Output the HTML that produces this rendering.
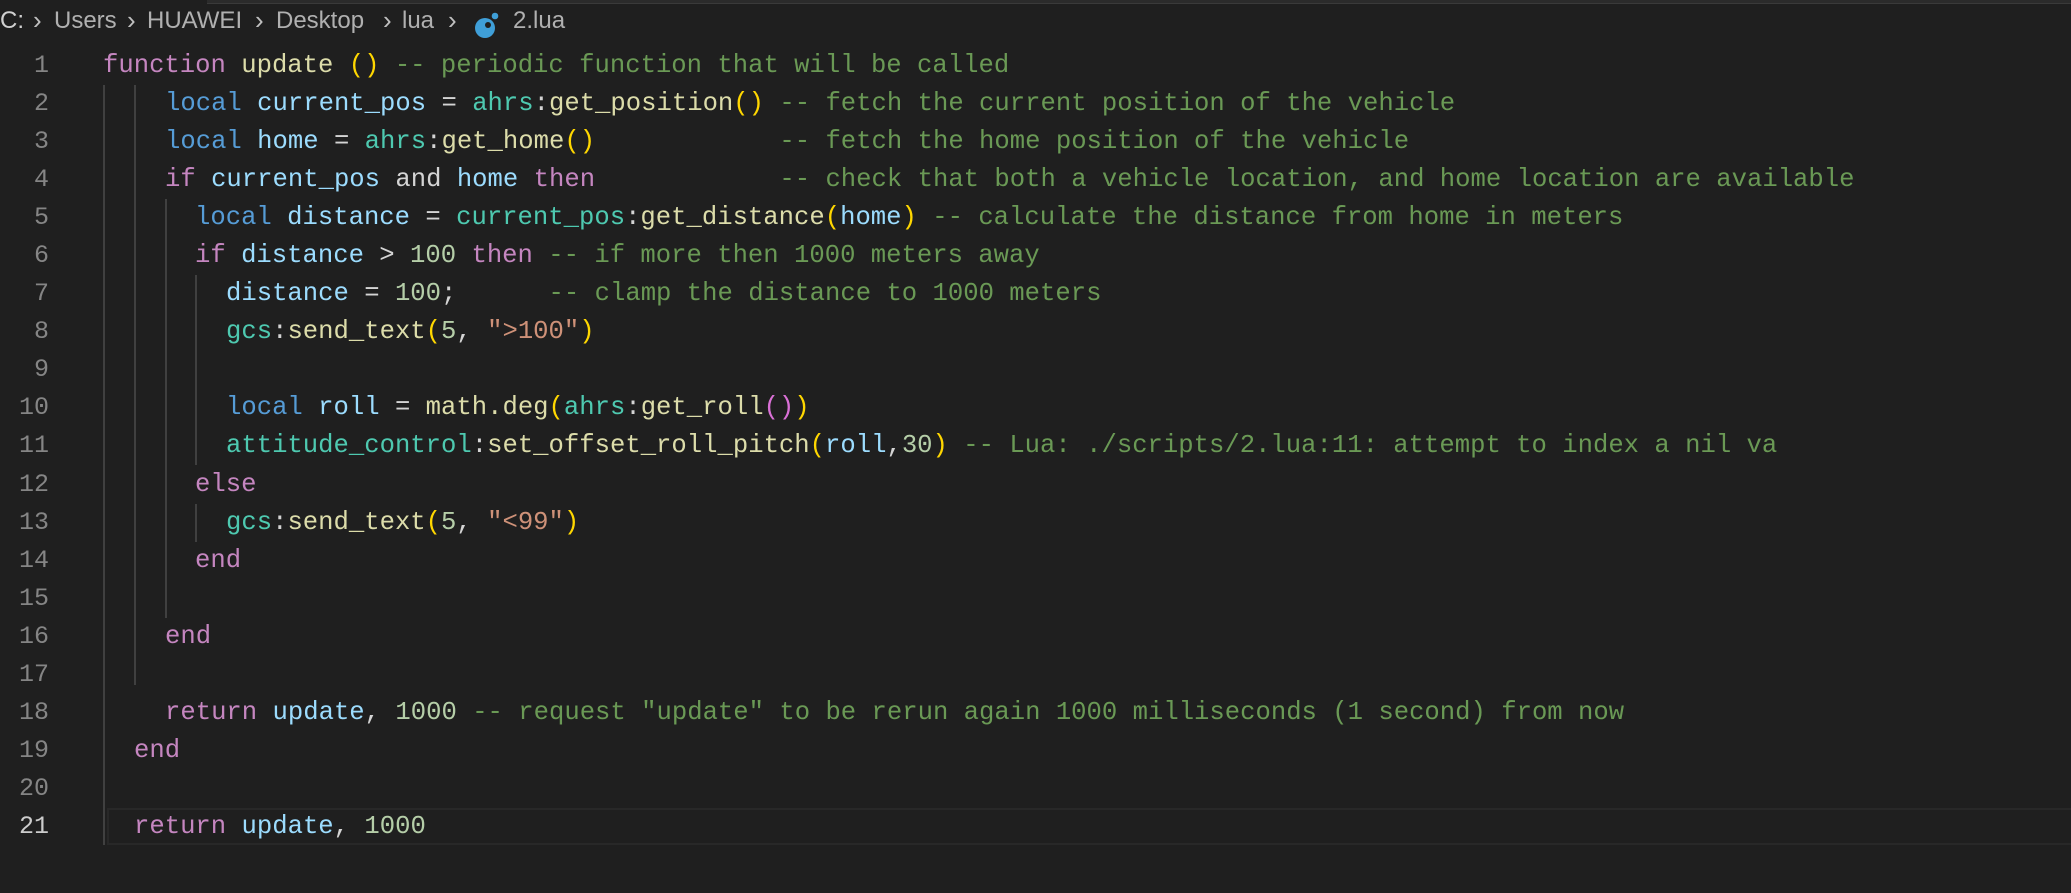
<!DOCTYPE html>
<html><head><meta charset="utf-8"><style>
html,body{margin:0;padding:0;width:2071px;height:893px;background:#1f1f1f;overflow:hidden}
.bc{position:absolute;top:7px;height:36px;font:24px "Liberation Sans",sans-serif;color:#b0b0b0;white-space:nowrap}
.bc span{position:absolute;top:0}
.bc .ch{font-size:26px;top:-2px;color:#c0c0c0}
.topline{position:absolute;top:0;left:207px;right:0;height:3px;background:#2b2b2b;border-bottom:1px solid #3a3a3a}
.ln{position:absolute;left:0;width:49px;text-align:right;font:25px "Liberation Mono",monospace;color:#858585;height:38px;line-height:38px}
.cl{position:absolute;left:0;font:25.6px "Liberation Mono",monospace;color:#d4d4d4;white-space:pre;height:38px;line-height:38px}
.g{position:absolute;width:2px;background:#404040}
.k{color:#c586c0}.b{color:#569cd6}.v{color:#9cdcfe}.f{color:#dcdcaa}.t{color:#4ec9b0}.c{color:#6a9955}.n{color:#b5cea8}.s{color:#ce9178}.y{color:#ffd700}.p{color:#da70d6}
</style></head><body>
<div class="topline"></div>
<div class="bc">
<span style="left:0;color:#d0d0d0">C:</span>
<span class="ch" style="left:33px">›</span>
<span style="left:54px">Users</span>
<span class="ch" style="left:127px">›</span>
<span style="left:147px">HUAWEI</span>
<span class="ch" style="left:255px">›</span>
<span style="left:276px">Desktop</span>
<span class="ch" style="left:383px">›</span>
<span style="left:402px">lua</span>
<span class="ch" style="left:448px">›</span>
<span style="left:513px">2.lua</span>
</div>
<svg style="position:absolute;left:474px;top:12px" width="26" height="28" viewBox="0 0 26 28"><circle cx="11" cy="16" r="10" fill="#3f9fd8"/><circle cx="14" cy="13" r="3" fill="#1f1f1f"/><circle cx="21" cy="4" r="3.3" fill="#3f9fd8"/></svg>

<div style="position:absolute;left:107px;top:808px;right:0;height:33px;border:2px solid #282828;border-right:none"></div>

<div class="g" style="left:103px;top:85px;height:760px"></div>
<div class="g" style="left:134px;top:85px;height:600px"></div>
<div class="g" style="left:165px;top:199px;height:419px"></div>
<div class="g" style="left:195px;top:275px;height:190px"></div>
<div class="g" style="left:195px;top:504px;height:38px"></div>

<div class="ln" style="top:47px">1</div>
<div class="ln" style="top:85px">2</div>
<div class="ln" style="top:123px">3</div>
<div class="ln" style="top:161px">4</div>
<div class="ln" style="top:199px">5</div>
<div class="ln" style="top:237px">6</div>
<div class="ln" style="top:275px">7</div>
<div class="ln" style="top:313px">8</div>
<div class="ln" style="top:351px">9</div>
<div class="ln" style="top:389px">10</div>
<div class="ln" style="top:427px">11</div>
<div class="ln" style="top:466px">12</div>
<div class="ln" style="top:504px">13</div>
<div class="ln" style="top:542px">14</div>
<div class="ln" style="top:580px">15</div>
<div class="ln" style="top:618px">16</div>
<div class="ln" style="top:656px">17</div>
<div class="ln" style="top:694px">18</div>
<div class="ln" style="top:732px">19</div>
<div class="ln" style="top:770px">20</div>
<div class="ln" style="top:808px;color:#cccccc">21</div>

<div class="cl" style="top:47px;left:103px"><span class="k">function</span> <span class="f">update</span> <span class="y">()</span> <span class="c">-- periodic function that will be called</span></div>
<div class="cl" style="top:85px;left:165px"><span class="b">local</span> <span class="v">current_pos</span> = <span class="t">ahrs</span>:<span class="f">get_position</span><span class="y">()</span> <span class="c">-- fetch the current position of the vehicle</span></div>
<div class="cl" style="top:123px;left:165px"><span class="b">local</span> <span class="v">home</span> = <span class="t">ahrs</span>:<span class="f">get_home</span><span class="y">()</span>            <span class="c">-- fetch the home position of the vehicle</span></div>
<div class="cl" style="top:161px;left:165px"><span class="k">if</span> <span class="v">current_pos</span> and <span class="v">home</span> <span class="k">then</span>            <span class="c">-- check that both a vehicle location, and home location are available</span></div>
<div class="cl" style="top:199px;left:195px"><span class="b">local</span> <span class="v">distance</span> = <span class="t">current_pos</span>:<span class="f">get_distance</span><span class="y">(</span><span class="v">home</span><span class="y">)</span> <span class="c">-- calculate the distance from home in meters</span></div>
<div class="cl" style="top:237px;left:195px"><span class="k">if</span> <span class="v">distance</span> &gt; <span class="n">100</span> <span class="k">then</span> <span class="c">-- if more then 1000 meters away</span></div>
<div class="cl" style="top:275px;left:226px"><span class="v">distance</span> = <span class="n">100</span>;      <span class="c">-- clamp the distance to 1000 meters</span></div>
<div class="cl" style="top:313px;left:226px"><span class="t">gcs</span>:<span class="f">send_text</span><span class="y">(</span><span class="n">5</span>, <span class="s">"&gt;100"</span><span class="y">)</span></div>
<div class="cl" style="top:389px;left:226px"><span class="b">local</span> <span class="v">roll</span> = <span class="f">math.deg</span><span class="y">(</span><span class="t">ahrs</span>:<span class="f">get_roll</span><span class="p">()</span><span class="y">)</span></div>
<div class="cl" style="top:427px;left:226px"><span class="t">attitude_control</span>:<span class="f">set_offset_roll_pitch</span><span class="y">(</span><span class="v">roll</span>,<span class="n">30</span><span class="y">)</span> <span class="c">-- Lua: ./scripts/2.lua:11: attempt to index a nil va</span></div>
<div class="cl" style="top:466px;left:195px"><span class="k">else</span></div>
<div class="cl" style="top:504px;left:226px"><span class="t">gcs</span>:<span class="f">send_text</span><span class="y">(</span><span class="n">5</span>, <span class="s">"&lt;99"</span><span class="y">)</span></div>
<div class="cl" style="top:542px;left:195px"><span class="k">end</span></div>
<div class="cl" style="top:618px;left:165px"><span class="k">end</span></div>
<div class="cl" style="top:694px;left:165px"><span class="k">return</span> <span class="v">update</span>, <span class="n">1000</span> <span class="c">-- request "update" to be rerun again 1000 milliseconds (1 second) from now</span></div>
<div class="cl" style="top:732px;left:134px"><span class="k">end</span></div>
<div class="cl" style="top:808px;left:134px"><span class="k">return</span> <span class="v">update</span>, <span class="n">1000</span></div>
</body></html>
